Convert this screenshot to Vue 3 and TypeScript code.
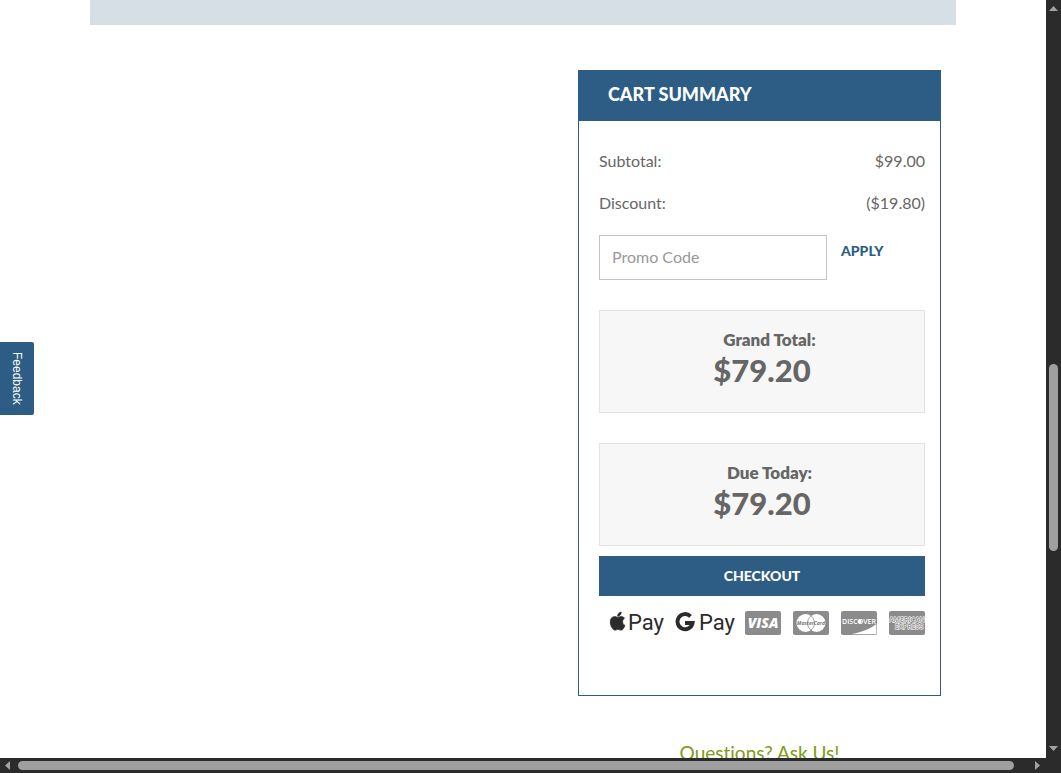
<script setup lang="ts">
import { ref } from 'vue'

interface Line {
  label: string
  value: string
}

const lines: Line[] = [
  { label: 'Subtotal:', value: '$99.00' },
  { label: 'Discount:', value: '($19.80)' },
]

const totals: Line[] = [
  { label: 'Grand Total:', value: '$79.20' },
  { label: 'Due Today:', value: '$79.20' },
]

const promo = ref('')
</script>

<template>
  <div class="window">
    <main class="page">
      <div class="container">
        <div class="strip"></div>
        <section class="summary">
          <h2 class="summary-title">CART SUMMARY</h2>
          <div class="summary-body">
            <dl class="lines">
              <div v-for="line in lines" :key="line.label" class="line">
                <dt>{{ line.label }}</dt>
                <dd>{{ line.value }}</dd>
              </div>
            </dl>
            <form class="promo" @submit.prevent>
              <input v-model="promo" class="promo-input" type="text" placeholder="Promo Code" aria-label="Promo Code" />
              <button class="apply" type="submit">APPLY</button>
            </form>
            <div v-for="total in totals" :key="total.label" class="total">
              <div class="total-label">{{ total.label }}</div>
              <div class="total-value">{{ total.value }}</div>
            </div>
            <button class="checkout" type="button">CHECKOUT</button>
            <div class="payments">
              <svg class="wallet" width="60" height="28" viewBox="0 0 60 28" role="img" aria-label="Apple Pay">
                <path
                  transform="translate(4.500 3) scale(.76)"
                  fill="#2b2b2b"
                  stroke="#2b2b2b"
                  stroke-width=".8"
                  d="M12.15 6.9c-.95 0-2.42-1.08-3.96-1.04-2.04.03-3.91 1.18-4.96 3.01-2.12 3.68-.55 9.1 1.52 12.09 1.01 1.45 2.21 3.09 3.79 3.04 1.52-.07 2.09-.99 3.94-.99 1.83 0 2.35.99 3.96.95 1.64-.03 2.68-1.48 3.68-2.95 1.16-1.69 1.64-3.33 1.66-3.42-.04-.01-3.18-1.22-3.22-4.86-.03-3.04 2.48-4.49 2.6-4.56-1.43-2.09-3.62-2.32-4.39-2.38-2-.15-3.68 1.09-4.62 1.09zM15.53 3.83c.84-1.01 1.4-2.43 1.25-3.83-1.21.05-2.66.8-3.53 1.82-.78.9-1.46 2.33-1.27 3.71 1.34.1 2.71-.69 3.55-1.7"
                />
                <text x="24" y="21" class="pay">Pay</text>
              </svg>
              <svg class="wallet" width="63" height="28" viewBox="0 0 63 28" role="img" aria-label="Google Pay">
                <path
                  d="M18.500 7.300A7.600 7.600 0 1 0 20.600 14H13"
                  fill="none"
                  stroke="#2b2b2b"
                  stroke-width="3.900"
                />
                <text x="27" y="21" class="pay">Pay</text>
              </svg>
              <svg class="card" width="36" height="24" viewBox="0 0 36 24" role="img" aria-label="Visa">
                <rect width="36" height="24" rx="2" fill="#8b8b8b" />
                <text x="18" y="17" class="visa">VISA</text>
              </svg>
              <svg class="card" width="36" height="24" viewBox="0 0 36 24" role="img" aria-label="MasterCard">
                <rect width="36" height="24" rx="2" fill="#8b8b8b" />
                <circle cx="12.500" cy="12" r="9" fill="#fff" />
                <circle cx="23.500" cy="12" r="9" fill="#fff" />
                <path d="M18 4.900a9 9 0 0 1 0 14.200a9 9 0 0 1 0-14.200z" fill="#fff" stroke="#8b8b8b" stroke-width=".8" />
                <text x="18" y="14" class="master">MasterCard</text>
              </svg>
              <svg class="card" width="36" height="24" viewBox="0 0 36 24" role="img" aria-label="Discover">
                <rect width="36" height="24" rx="2" fill="#8b8b8b" />
                <path d="M10 23.200C20 21.500 29 18 35.400 13v9.200q0 1-1 1z" fill="#fff" />
                <text x="18" y="13" class="discover">DISCOVER</text>
                <circle cx="18.500" cy="10.500" r="2" fill="#fff" />
              </svg>
              <svg class="card" width="36" height="24" viewBox="0 0 36 24" role="img" aria-label="American Express">
                <rect width="36" height="24" rx="2" fill="#8b8b8b" />
                <text x="18" y="11" class="amex">AMERICAN</text>
                <text x="20" y="18" class="amex">EXPRESS</text>
              </svg>
            </div>
          </div>
        </section>
        <a class="questions" href="#">Questions? Ask Us!</a>
      </div>
      <button class="feedback" type="button">Feedback</button>
    </main>

    <div class="bar bar-y" aria-hidden="true">
      <svg width="15" height="16" viewBox="0 0 15 16"><path d="M3 11l4.500-5 4.500 5z" fill="#a3a3a3" /></svg>
      <div class="track"><div class="thumb"></div></div>
      <svg width="15" height="16" viewBox="0 0 15 16"><path d="M3 4l4.500 5 4.500-5z" fill="#a3a3a3" /></svg>
    </div>
    <div class="bar bar-x" aria-hidden="true">
      <svg width="16" height="15" viewBox="0 0 16 15"><path d="M10 3l-5 4.500 5 4.500z" fill="#a3a3a3" /></svg>
      <div class="track"><div class="thumb"></div></div>
      <svg width="16" height="15" viewBox="0 0 16 15"><path d="M5 3l5 4.500-5 4.500z" fill="#a3a3a3" /></svg>
    </div>
    <div class="corner"></div>
  </div>
</template>

<style>
body {
  margin: 0;
}
</style>

<style scoped>
* {
  box-sizing: border-box;
}

.window {
  display: grid;
  grid-template: minmax(0, 1fr) 15px / minmax(0, 1fr) 15px;
  height: 100vh;
  overflow: hidden;
  background: #fff;
  color: #666;
  font: 16px/24px Lato, "Open Sans", sans-serif;
  font-variant-ligatures: none;
}

button,
input {
  font-family: inherit;
}

.page {
  position: relative;
  overflow: hidden;
}

.container {
  display: flex;
  flex-direction: column;
  align-items: flex-end;
  max-width: 866px;
  margin: 0 auto;
}

.strip {
  align-self: stretch;
  height: 25px;
  background: #d6dfe6;
}

.summary {
  width: 363px;
  margin: 45px 15px 0 0;
  border: 1px solid #2d5d85;
}

.summary-title {
  margin: 0;
  padding: 11px 29px 15px;
  background: #2d5d85;
  color: #fff;
  font-size: 18px;
  font-weight: 900;
  line-height: 24px;
}

.summary-body {
  padding: 19px 15px 58px 20px;
}

.lines {
  margin: 0 0 11px;
}

.line {
  display: flex;
  justify-content: space-between;
  padding: 9px 0;
}

.line dd {
  margin: 0;
}

.promo {
  display: flex;
  align-items: flex-start;
  gap: 14px;
  margin-bottom: 30px;
}

.promo-input {
  width: 228px;
  height: 45px;
  padding: 0 12px 2px;
  border: 1px solid #c4c4c4;
  border-radius: 0;
  color: #666;
  font-size: 16px;
}

.promo-input::placeholder {
  color: #999;
  opacity: 1;
}

.apply {
  padding: 6px 0;
  border: 0;
  background: none;
  color: #2d5d85;
  font-size: 14px;
  font-weight: 900;
  line-height: 20px;
}

.total {
  height: 103px;
  padding: 17px 0 0;
  border: 1px solid #e1e3e5;
  background: #f7f7f7;
  text-align: center;
}

.total + .total {
  margin-top: 30px;
}

.total-label {
  padding-left: 15px;
  font-size: 17px;
  font-weight: 800;
  line-height: 24px;
}

.total-value {
  font-size: 31px;
  font-weight: 900;
  line-height: 36px;
}

.checkout {
  display: block;
  width: 100%;
  height: 40px;
  margin-top: 10px;
  padding: 0 0 2px;
  border: 0;
  background: #2d5d85;
  color: #fff;
  font-size: 14px;
  font-weight: 900;
}

.payments {
  display: flex;
  justify-content: flex-end;
  align-items: center;
  gap: 12px;
  height: 28px;
  margin-top: 13px;
}

.wallet + .wallet {
  margin: 0 -2px 0 -4px;
}

.pay {
  fill: #2b2b2b;
  font: 22px Roboto, sans-serif;
}

.visa,
.master,
.discover,
.amex {
  fill: #fff;
  font-family: "Open Sans", sans-serif;
  text-anchor: middle;
}

.visa {
  font-size: 14px;
  font-style: italic;
  font-weight: 800;
}

.master {
  fill: #777;
  font-size: 5px;
  font-style: italic;
  font-weight: 700;
}

.discover {
  font-size: 7px;
  font-weight: 600;
}

.amex {
  fill: #8b8b8b;
  stroke: #fff;
  stroke-width: 1px;
  paint-order: stroke;
  font-size: 7px;
  font-weight: 600;
}

.questions {
  width: 363px;
  margin: 45px 15px 0 0;
  color: #7d9b17;
  font-size: 19px;
  line-height: 24px;
  text-align: center;
  text-decoration: none;
}

.feedback {
  position: absolute;
  top: 342px;
  left: 0;
  width: 34px;
  height: 73px;
  padding: 0;
  border: 0;
  border-radius: 0 2px 2px 0;
  background: #2d5d85;
  color: #fff;
  font: 12px "Liberation Sans", sans-serif;
  writing-mode: vertical-rl;
}

.bar {
  display: flex;
  background: #2b2b2b;
}

.bar-y {
  flex-direction: column;
}

.track {
  display: flex;
  flex: 1;
  align-items: center;
}

.thumb {
  border-radius: 5px;
  background: #9f9f9f;
}

.bar-y .track {
  flex-direction: column;
}

.bar-y .track::before,
.bar-y .track::after {
  content: "";
  flex: 348;
}

.bar-y .track::after {
  flex: 191;
}

.bar-y .thumb {
  flex: 187;
  width: 9px;
}

.bar-x .track {
  padding: 0 16px 0 2px;
}

.bar-x .thumb {
  width: 100%;
  height: 9px;
}

.corner {
  background: #2b2b2b;
}
</style>
